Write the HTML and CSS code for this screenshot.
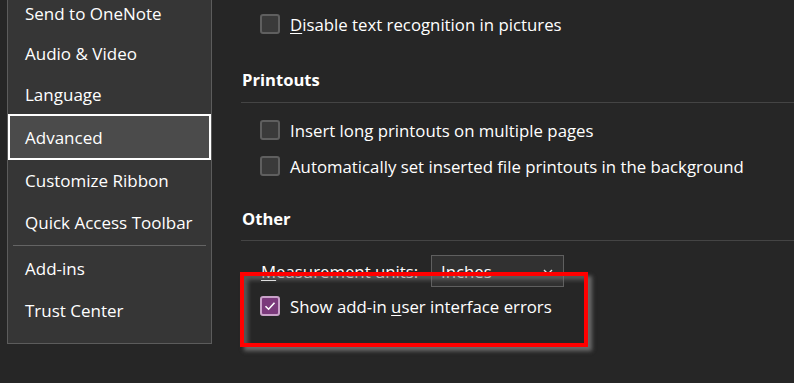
FILE: index.html
```html
<!DOCTYPE html>
<html>
<head>
<meta charset="utf-8">
<link rel="stylesheet" href="styles.css">
</head>
<body>
<div class="page">
  <nav class="sidebar">
    <div class="item h40">Send to OneNote</div>
    <div class="item h41">Audio &amp; Video</div>
    <div class="item h40">Language</div>
    <div class="item selected">Advanced</div>
    <div class="item h41">Customize Ribbon</div>
    <div class="item h43">Quick Access Toolbar</div>
    <div class="nav-sep"></div>
    <div class="item h44">Add-ins</div>
    <div class="item h40">Trust Center</div>
  </nav>
  <main class="content">
    <div class="row first">
      <span class="cb"></span>
      <span class="label"><span class="u">D</span>isable text recognition in pictures</span>
    </div>
    <div class="heading h-printouts">Printouts</div>
    <div class="sep sep-printouts"></div>
    <div class="row r-insert">
      <span class="cb"></span>
      <span class="label">Insert long printouts on multiple pages</span>
    </div>
    <div class="row">
      <span class="cb"></span>
      <span class="label">Automatically set inserted file printouts in the background</span>
    </div>
    <div class="heading h-other">Other</div>
    <div class="sep sep-other"></div>
    <div class="measure">
      <span class="mlabel"><span class="u">M</span>easurement units:</span>
      <div class="select">
        <span>Inches</span>
        <svg class="chev" width="10" height="6" viewBox="0 0 10 6"><path d="M1 1 L5 5 L9 1" fill="none" stroke="#e6e6e6" stroke-width="1.4"/></svg>
      </div>
    </div>
    <div class="row r-show">
      <span class="cb checked">
        <svg width="14" height="14" viewBox="0 0 14 14"><path d="M2.5 7.2 L5.6 10.2 L11.5 3.8" fill="none" stroke="#ffffff" stroke-width="1.6"/></svg>
      </span>
      <span class="label">Show add-in <span class="u">u</span>ser interface errors</span>
    </div>
  </main>
  <div class="highlight"></div>
</div>
</body>
</html>
```

FILE: styles.css
```css
html, body {
  margin: 0;
  padding: 0;
  background: #262626;
  overflow: hidden;
}
body {
  font-family: "Open Sans", "Noto Sans", sans-serif;
  font-size: 16.8px;
  color: #ffffff;
}
.page {
  position: relative;
  display: flex;
  align-items: flex-start;
  width: 794px;
  height: 383px;
}
.sidebar {
  margin-left: 7px;
  margin-top: -8px;
  width: 203px;
  border: 1px solid #5c5c5c;
  background: #363636;
  padding-bottom: 13px;
  display: flex;
  flex-direction: column;
  flex-shrink: 0;
}
.item {
  display: flex;
  align-items: center;
  padding-left: 17px;
  font-size: 17px;
  white-space: nowrap;
}
.h40 { height: 40px; }
.h41 { height: 41px; }
.h43 { height: 43px; }
.h44 { height: 44px; }
.item.selected {
  height: 42px;
  border: 2px solid #ffffff;
  background: #4b4b4b;
  padding-left: 15px;
}
.nav-sep {
  height: 1px;
  margin: 1px 5px 0 5px;
  background: #646464;
}
.content {
  margin-left: 29px;
  flex: 1;
  display: flex;
  flex-direction: column;
  margin-top: 6px;
}
.row {
  display: flex;
  align-items: center;
  height: 36px;
  padding-left: 19px;
}
.cb {
  width: 16px;
  height: 16px;
  border: 2px solid #5f5f5f;
  border-radius: 3px;
  background: #3a3a3a;
  margin-right: 10px;
  flex-shrink: 0;
  display: flex;
  align-items: center;
  justify-content: center;
}
.cb.checked {
  background: #7b3a7c;
  border-color: #c9a2c9;
}
.label {
  white-space: nowrap;
}
.u {
  text-decoration: underline;
  text-underline-offset: 2px;
}
.heading {
  font-weight: 700;
  font-size: 16.6px;
  height: 30px;
  display: flex;
  align-items: center;
  padding-left: 1px;
}
.h-printouts { margin-top: 22px; }
.h-other { margin-top: 19px; }
.sep {
  height: 1px;
  background: #444444;
}
.sep-printouts { margin-top: 8px; }
.sep-other { margin-top: 7px; }
.r-insert { margin-top: 9px; }
.measure {
  margin-top: 14px;
  height: 32px;
  display: flex;
  align-items: center;
  padding-left: 20px;
}
.mlabel {
  width: 170px;
  white-space: nowrap;
}
.select {
  border: 1px solid #5f5f5f;
  background: #313131;
  display: flex;
  align-items: center;
  justify-content: space-between;
  padding: 0 10px 0 9px;
  box-sizing: border-box;
  width: 133px;
  height: 32px;
}
.chev { margin-top: 1px; }
.r-show { margin-top: 1px; }
.highlight {
  position: absolute;
  left: 240px;
  top: 272px;
  width: 340px;
  height: 67px;
  border: 4px solid #ff0000;
  box-shadow: 4px 4px 4px rgba(130, 130, 130, 0.75), inset 4px 4px 4px rgba(120, 120, 120, 0.6);
}
```
